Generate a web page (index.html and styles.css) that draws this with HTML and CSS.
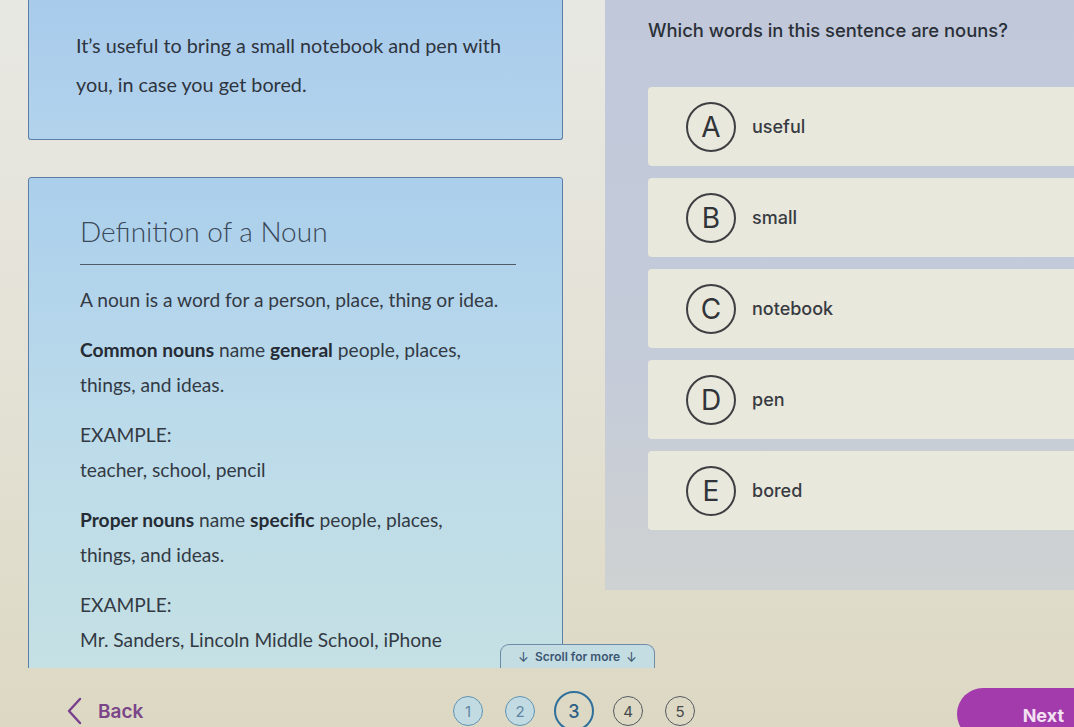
FILE: index.html
```html
<!DOCTYPE html>
<html lang="en">
<head>
<meta charset="utf-8">
<title>Nouns quiz</title>
<link rel="stylesheet" href="styles.css">
</head>
<body>
<div class="page">
  <main class="main">
    <section class="left">
      <div class="passage">
        <p class="passage-text">It’s useful to bring a small notebook and pen with you, in case you get bored.</p>
      </div>
      <div class="definition">
        <h2 class="def-title">Definition of a Noun</h2>
        <hr class="def-rule">
        <p class="def-p">A noun is a word for a person, place, thing or idea.</p>
        <p class="def-p"><b>Common nouns</b> name <b>general</b> people, places,<br>things, and ideas.</p>
        <p class="def-p">EXAMPLE:<br>teacher, school, pencil</p>
        <p class="def-p"><b>Proper nouns</b> name <b>specific</b> people, places,<br>things, and ideas.</p>
        <p class="def-p">EXAMPLE:<br>Mr. Sanders, Lincoln Middle School, iPhone</p>
      </div>
    </section>
    <div class="scroll-tab"><span class="arrow">↓</span> Scroll for more <span class="arrow">↓</span></div>
    <section class="right">
      <h1 class="question">Which words in this sentence are nouns?</h1>
      <div class="choices">
        <div class="choice"><span class="letter">A</span><span class="label">useful</span></div>
        <div class="choice"><span class="letter">B</span><span class="label">small</span></div>
        <div class="choice"><span class="letter">C</span><span class="label">notebook</span></div>
        <div class="choice"><span class="letter">D</span><span class="label">pen</span></div>
        <div class="choice"><span class="letter">E</span><span class="label">bored</span></div>
      </div>
    </section>
  </main>
  <nav class="nav">
    <div class="back">
      <svg class="chev" width="16" height="28" viewBox="0 0 16 28"><polyline points="14,2 3,14 14,26" fill="none" stroke="#7a3f8c" stroke-width="2.4" stroke-linecap="round" stroke-linejoin="round"/></svg>
      <span class="back-text">Back</span>
    </div>
    <div class="pages">
      <span class="pg done">1</span>
      <span class="pg done">2</span>
      <span class="pg current">3</span>
      <span class="pg">4</span>
      <span class="pg">5</span>
    </div>
    <div class="spacer"></div>
    <button class="next">Next</button>
  </nav>
</div>
</body>
</html>
```
FILE: styles.css
```css
html, body {
  margin: 0;
  padding: 0;
  height: 727px;
  overflow: hidden;
}
body {
  background: linear-gradient(180deg, #e8e8e3 0%, #e4e2d6 50%, #dcd8c3 100%);
  font-family: Lato, "Liberation Sans", sans-serif;
  color: #2f3640;
}
.page {
  width: 1074px;
  height: 727px;
  overflow: hidden;
}
.main {
  display: flex;
  height: 680px;
  position: relative;
}
.left {
  width: 535px;
  margin-left: 28px;
  height: 668px;
  overflow: hidden;
  display: flex;
  flex-direction: column;
  gap: 37px;
  flex-shrink: 0;
}
.passage {
  flex-shrink: 0;
  height: 140px;
  box-sizing: border-box;
  background: linear-gradient(180deg, #a8cbec 0%, #b3d3ec 100%);
  border: 1.5px solid #5a7ea6;
  border-top: none;
  border-radius: 0 0 3px 3px;
  padding: 26px 40px 0 47px;
}
.passage-text {
  margin: 0;
  font-size: 19.8px;
  line-height: 39px;
  color: #2e3540;
}
.definition {
  flex-shrink: 0;
  box-sizing: border-box;
  background: linear-gradient(180deg, #abcfec 0%, #bcdbea 45%, #c7e2e2 100%);
  border: 1.5px solid #5a7ea6;
  border-radius: 3px;
  padding: 35px 46px 30px 51px;
  height: 560px;
}
.def-title {
  margin: 0;
  font-size: 28px;
  font-weight: 300;
  line-height: 36px;
  color: #3a4858;
}
.def-rule {
  margin: 15px 0 17px;
  border: none;
  border-top: 1.5px solid #4f5a66;
}
.def-p {
  margin: 0 0 15px;
  font-size: 19.2px;
  line-height: 35px;
  color: #333a44;
}
.def-p b {
  font-weight: 700;
  color: #262c35;
}
.scroll-tab {
  position: absolute;
  left: 500px;
  top: 644px;
  width: 155px;
  height: 24px;
  box-sizing: border-box;
  border: 1.5px solid #6d8ba6;
  border-bottom: none;
  border-radius: 9px 9px 0 0;
  background: #c4dde3;
  font-family: Inter, "Liberation Sans", sans-serif;
  font-size: 12px;
  font-weight: 600;
  color: #3b5672;
  display: flex;
  align-items: center;
  justify-content: center;
  gap: 6px;
}
.scroll-tab .arrow {
  font-weight: 400;
  font-size: 13px;
}
.right {
  margin-left: 42px;
  flex: 1;
  height: 590px;
  box-sizing: border-box;
  padding: 18px 0 0 43px;
  background: linear-gradient(180deg, #c0c8da 0%, #c4cbd9 60%, #cfd2d2 100%);
  font-family: Inter, "Liberation Sans", sans-serif;
}
.question {
  margin: 0 0 45px;
  font-size: 18.4px;
  font-weight: 500;
  line-height: 24px;
  color: #2b3038;
}
.choices {
  display: flex;
  flex-direction: column;
  gap: 12px;
}
.choice {
  height: 79px;
  display: flex;
  align-items: center;
  padding-left: 38px;
  background: #e9e8dc;
  border-radius: 4px 0 0 4px;
}
.letter {
  width: 50px;
  height: 50px;
  box-sizing: border-box;
  border: 2px solid #3e3f42;
  border-radius: 50%;
  display: flex;
  align-items: center;
  justify-content: center;
  font-size: 28px;
  font-weight: 400;
  color: #303338;
}
.label {
  margin-left: 16px;
  font-size: 18px;
  font-weight: 500;
  color: #383b42;
}
.nav {
  display: flex;
  align-items: center;
  height: 62px;
  font-family: Inter, "Liberation Sans", sans-serif;
}
.back {
  width: 453px;
  box-sizing: border-box;
  padding-left: 66px;
  display: flex;
  align-items: center;
  gap: 16px;
}
.back-text {
  font-size: 19px;
  font-weight: 600;
  color: #7a4589;
}
.pages {
  display: flex;
  align-items: center;
  gap: 22px;
}
.pg {
  width: 30px;
  height: 30px;
  box-sizing: border-box;
  border-radius: 50%;
  border: 1.5px solid #555a60;
  display: flex;
  align-items: center;
  justify-content: center;
  font-size: 15px;
  color: #45484d;
}
.pg.done {
  border-color: #5f93b3;
  background: #c2dbe2;
  color: #5f86a3;
}
.pg.current {
  width: 40px;
  height: 40px;
  border: 2.5px solid #2f6f9b;
  font-size: 18px;
  font-weight: 500;
  color: #2b5f86;
  margin: 0 -3px;
}
.spacer {
  flex: 1;
}
.next {
  align-self: flex-start;
  margin-top: 8px;
  width: 117px;
  height: 52px;
  box-sizing: border-box;
  padding: 3px 10px 0 0;
  border: none;
  border-radius: 26px 0 0 26px;
  background: #a33bad;
  color: #f3e2f2;
  font-family: Inter, "Liberation Sans", sans-serif;
  font-size: 18px;
  font-weight: 700;
  text-align: right;
}
```
